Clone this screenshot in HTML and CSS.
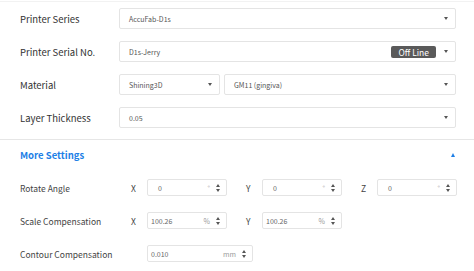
FILE: index.html
```html
<!DOCTYPE html>
<html lang="en">

<head>
    <meta charset="UTF-8">
    <title>Print Settings</title>
    <link rel="stylesheet" href="styles.css">
</head>

<body>

    <div class="panel">
        <div class="row">
            <label class="label">Printer Series</label>
            <div class="select">
                <span class="value">AccuFab-D1s</span>
                <span class="caret"></span>
            </div>
        </div>

        <div class="row">
            <label class="label">Printer Serial No.</label>
            <div class="select">
                <span class="value">D1s-Jerry</span>
                <span class="badge">Off Line</span>
                <span class="caret"></span>
            </div>
        </div>

        <div class="row">
            <label class="label">Material</label>
            <div class="split">
                <div class="select small">
                    <span class="value">Shining3D</span>
                    <span class="caret"></span>
                </div>
                <div class="select">
                    <span class="value">GM11 (gingiva)</span>
                    <span class="caret"></span>
                </div>
            </div>
        </div>

        <div class="row">
            <label class="label">Layer Thickness</label>
            <div class="select">
                <span class="value">0.05</span>
                <span class="caret"></span>
            </div>
        </div>
    </div>

    <!-- More settings -->
    <div class="more">
        <div class="more-head">
            <span class="more-title">More Settings</span>
            <span class="caret-up"></span>
        </div>

        <div class="sub-row">
            <span class="sub-label">Rotate Angle</span>
            <div class="axis">
                <span class="axis-name">X</span>
                <div class="number padded">
                    <span class="num">0</span>
                    <span class="unit">°</span>
                    <span class="spin"></span>
                </div>
            </div>
            <div class="axis">
                <span class="axis-name">Y</span>
                <div class="number padded">
                    <span class="num">0</span>
                    <span class="unit">°</span>
                    <span class="spin"></span>
                </div>
            </div>
            <div class="axis">
                <span class="axis-name">Z</span>
                <div class="number padded">
                    <span class="num">0</span>
                    <span class="unit">°</span>
                    <span class="spin"></span>
                </div>
            </div>
        </div>

        <div class="sub-row">
            <span class="sub-label">Scale Compensation</span>
            <div class="axis">
                <span class="axis-name">X</span>
                <div class="number">
                    <span class="num">100.26</span>
                    <span class="unit">%</span>
                    <span class="spin"></span>
                </div>
            </div>
            <div class="axis">
                <span class="axis-name">Y</span>
                <div class="number">
                    <span class="num">100.26</span>
                    <span class="unit">%</span>
                    <span class="spin"></span>
                </div>
            </div>
        </div>

        <div class="sub-row">
            <span class="sub-label">Contour Compensation</span>
            <div class="axis">
                <span class="axis-name"></span>
                <div class="number wide">
                    <span class="num">0.010</span>
                    <span class="unit">mm</span>
                    <span class="spin"></span>
                </div>
            </div>
        </div>
    </div>

</body>

</html>
```

FILE: styles.css
```css
body {
    margin: 0;
    background: #fff;
    font-family: 'Noto Sans CJK SC', 'Noto Sans', sans-serif;
    color: #333;
}

.panel {
    border-top: 1px solid #f2f2f2;
    margin-top: 1px;
    padding: 6px 18px 11px 20px;
    border-bottom: 1px solid #e6e6e6;
    display: flex;
    flex-direction: column;
    gap: 12px;
}

.row {
    display: flex;
    align-items: center;
    height: 21px;
}

.label {
    width: 99px;
    font-size: 9.5px;
    color: #333;
}

.select {
    flex: 1;
    height: 21px;
    box-sizing: border-box;
    border: 1px solid #e4e4e4;
    border-radius: 2px;
    display: flex;
    align-items: center;
    padding: 0 7px 0 9px;
    font-size: 7px;
    color: #555;
}

.select .value {
    flex: 1;
}

.split {
    flex: 1;
    display: flex;
    gap: 4px;
}

.select.small {
    flex: 0 0 101px;
}

.caret {
    width: 0;
    height: 0;
    border-left: 2.5px solid transparent;
    border-right: 2.5px solid transparent;
    border-top: 3px solid #555;
}

.badge {
    background: #5a5a5a;
    color: #fff;
    font-size: 8.5px;
    padding: 0 7px;
    white-space: nowrap;
    height: 12px;
    line-height: 12px;
    border-radius: 2px;
    margin-right: 8px;
}

.more {
    padding: 7px 18px 0 20px;
}

.more-head {
    display: flex;
    align-items: center;
    justify-content: space-between;
    height: 15px;
}

.more-title {
    color: #1e7fe6;
    font-size: 9.5px;
    font-weight: 600;
}

.caret-up {
    width: 0;
    height: 0;
    border-left: 2.5px solid transparent;
    border-right: 2.5px solid transparent;
    border-bottom: 4px solid #1e7fe6;
    margin-right: 1px;
}

.sub-row {
    display: flex;
    align-items: center;
    height: 17px;
    margin-top: 17px;
}

.sub-row + .sub-row {
    margin-top: 16px;
}

.sub-label {
    flex: 0 0 111px;
    font-size: 8.5px;
    color: #444;
}

.axis {
    flex: 0 0 115px;
    display: flex;
    align-items: center;
}

.axis-name {
    flex: 0 0 16px;
    font-size: 8.5px;
    color: #444;
}

.number {
    flex: 0 0 80px;
    height: 17px;
    box-sizing: border-box;
    border: 1px solid #e4e4e4;
    border-radius: 2px;
    display: flex;
    align-items: center;
    padding: 0 5px 0 3px;
    font-size: 7px;
    color: #666;
}

.number.padded {
    padding-left: 10px;
}

.number.wide {
    flex-basis: 106px;
}

.num {
    flex: 1;
}

.unit {
    color: #999;
    margin-right: 6px;
}

.spin {
    width: 5px;
    height: 8px;
    position: relative;
}

.spin::before,
.spin::after {
    content: "";
    position: absolute;
    left: 0;
    border-left: 2.5px solid transparent;
    border-right: 2.5px solid transparent;
}

.spin::before {
    top: 0;
    border-bottom: 3px solid #555;
}

.spin::after {
    bottom: 0;
    border-top: 3px solid #555;
}
```
